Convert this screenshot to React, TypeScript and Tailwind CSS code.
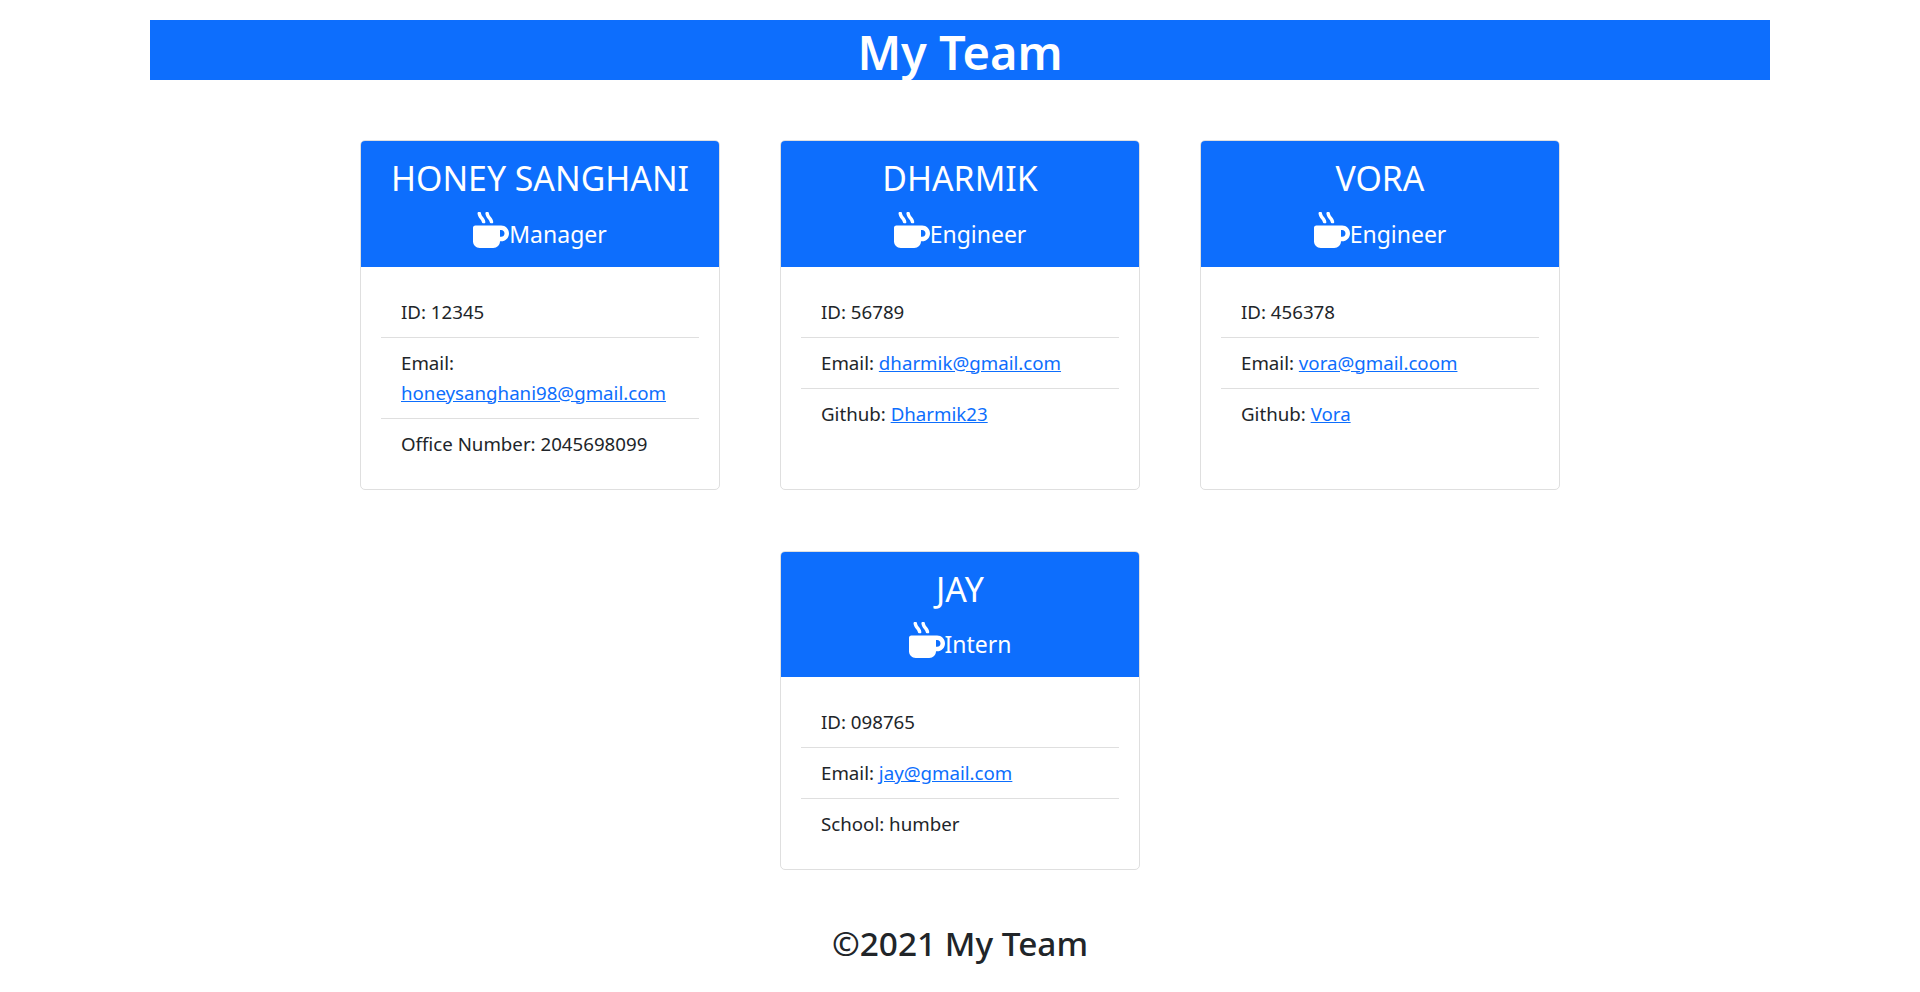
import React from 'react';
import { FaMugHot } from 'react-icons/fa';

type Row = { label: string; value: string; href?: boolean };

interface Member {
  name: string;
  role: string;
  rows: Row[];
}

const firstRow: Member[] = [
  {
    name: 'HONEY SANGHANI',
    role: 'Manager',
    rows: [
      { label: 'ID:', value: '12345' },
      { label: 'Email:', value: 'honeysanghani98@gmail.com', href: true },
      { label: 'Office Number:', value: '2045698099' },
    ],
  },
  {
    name: 'DHARMIK',
    role: 'Engineer',
    rows: [
      { label: 'ID:', value: '56789' },
      { label: 'Email:', value: 'dharmik@gmail.com', href: true },
      { label: 'Github:', value: 'Dharmik23', href: true },
    ],
  },
  {
    name: 'VORA',
    role: 'Engineer',
    rows: [
      { label: 'ID:', value: '456378' },
      { label: 'Email:', value: 'vora@gmail.coom', href: true },
      { label: 'Github:', value: 'Vora', href: true },
    ],
  },
];

const jay: Member = {
  name: 'JAY',
  role: 'Intern',
  rows: [
    { label: 'ID:', value: '098765' },
    { label: 'Email:', value: 'jay@gmail.com', href: true },
    { label: 'School:', value: 'humber' },
  ],
};

function TeamCard({ member, className }: { member: Member; className: string }) {
  return (
    <div className={`flex w-[360px] flex-col rounded-[5px] border border-[#dfdfdf] bg-white ${className}`}>
      <div className="flex h-[125.5px] flex-col items-center rounded-t-[4px] bg-[#0d6efd] pt-[18px] text-white">
        <h2 className="text-[33.8px] leading-[38px]">{member.name}</h2>
        <div className="mt-[18px] flex h-[38px] items-center">
          <FaMugHot className="mb-[9px] h-[36px] w-[36px]" />
          <span className="text-[23px] leading-[29px]">{member.role}</span>
        </div>
      </div>
      <ul className="px-[20px] pt-[20px]">
        {member.rows.map((row) => (
          <li
            key={row.label}
            className="border-b border-[#dfdfdf] px-[20px] py-[10px] text-[18.7px] leading-[30px] text-[#212529] last:border-b-0"
          >
            {row.label}{' '}
            {row.href ? (
              <a href="#" className="text-[#0d6efd] underline">
                {row.value}
              </a>
            ) : (
              row.value
            )}
          </li>
        ))}
      </ul>
    </div>
  );
}

export default function App() {
  return (
    <div className="min-h-[992px] bg-white font-['Noto_Sans','Open_Sans',sans-serif] text-[#212529]">
      <div className="mx-auto w-[1620px] pt-[20px]">
        <header className="h-[60px] bg-[#0d6efd] text-center text-[47px] font-semibold leading-[64px] text-white">
          <h1>My Team</h1>
        </header>
        <main className="mt-[60px] flex flex-col items-center">
          <div className="flex gap-[60px]">
            {firstRow.map((member) => (
              <TeamCard key={member.name} member={member} className="h-[350px]" />
            ))}
          </div>
          <TeamCard member={jay} className="mt-[60.9px] h-[319.5px]" />
        </main>
        <footer className="mt-[49.6px] text-center text-[33.4px] font-medium leading-[46px]">©2021 My Team</footer>
      </div>
    </div>
  );
}
